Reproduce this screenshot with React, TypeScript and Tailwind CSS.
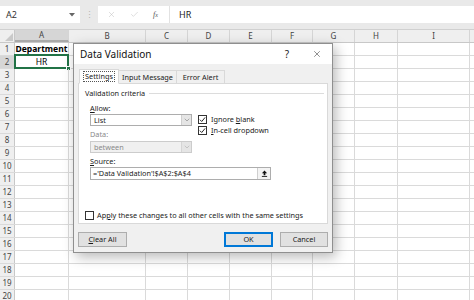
import { X, Check, ChevronDown } from "lucide-react";

const cols = [
  { name: "A", w: "w-[54px]" },
  { name: "B", w: "w-[77px]" },
  { name: "C", w: "w-[42px]" },
  { name: "D", w: "w-[42px]" },
  { name: "E", w: "w-[42px]" },
  { name: "F", w: "w-[41px]" },
  { name: "G", w: "w-[42px]" },
  { name: "H", w: "w-[43px]" },
  { name: "I", w: "w-[72px]" },
  { name: "", w: "w-[42px]" },
];

const rows = Array.from({ length: 20 }, (_, i) => i + 1);

function Tick() {
  return (
    <svg width="7" height="7" viewBox="0 0 8 8" className="block">
      <path d="M1 4.2 L3.1 6.3 L7 1.6" fill="none" stroke="#222" strokeWidth="1.1" />
    </svg>
  );
}

function CheckBox({ checked }: { checked?: boolean }) {
  return (
    <div className="w-[9px] h-[9px] border border-[#333] bg-white flex items-center justify-center flex-shrink-0">
      {checked && <Tick />}
    </div>
  );
}

function Spreadsheet() {
  return (
    <div className="flex flex-col">
      {/* Column headers */}
      <div className="flex h-[13px] bg-[#efefef] border-b border-[#c8c8c8]">
        <div className="w-[15px] flex-shrink-0 border-r border-[#c8c8c8] flex items-end justify-end pr-[1px] pb-[1px]">
          <svg width="8" height="8" viewBox="0 0 8 8">
            <path d="M8 0 L8 8 L0 8 Z" fill="#c9c9c9" />
          </svg>
        </div>
        {cols.map((c, i) => (
          <div
            key={i}
            className={`${c.w} flex-shrink-0 border-r border-[#d5d5d5] flex items-center justify-center text-[8px] text-[#444] ${
              c.name === "A" ? "bg-[#d6d6d6] border-b-2 border-b-[#a9a9a9]" : ""
            }`}
          >
            {c.name}
          </div>
        ))}
      </div>
      {rows.map((r) => (
        <div key={r} className="flex h-[13px] border-b border-[#dadada]">
          <div
            className={`w-[15px] flex-shrink-0 border-r border-[#c8c8c8] flex items-center justify-center text-[8px] text-[#444] ${
              r === 2 ? "bg-[#d6d6d6]" : "bg-[#efefef]"
            }`}
          >
            {r}
          </div>
          {cols.map((c, i) => (
            <div
              key={i}
              className={`${c.w} flex-shrink-0 border-r border-[#dadada] relative flex items-center justify-center text-[8.5px] text-black`}
            >
              {c.name === "A" && r === 1 && <span className="font-bold">Department</span>}
              {c.name === "A" && r === 2 && (
                <>
                  <span>HR</span>
                  <div className="absolute -left-[1px] -top-[2px] -right-[1px] -bottom-[1px] border-2 border-[#217346]" />
                  <div className="absolute -right-[3px] -bottom-[3px] w-[5px] h-[5px] bg-[#217346] border border-white" />
                </>
              )}
            </div>
          ))}
        </div>
      ))}
    </div>
  );
}

function FormulaBar() {
  return (
    <div className="h-[30px] bg-[#e9e9e9] flex items-start pt-[6px] border-b border-[#d0d0d0]">
      <div className="w-[80px] h-[17px] bg-white flex items-center justify-between pl-[6px] pr-[5px] text-[9px] text-[#333]">
        <span>A2</span>
        <svg width="6" height="4" viewBox="0 0 6 4">
          <path d="M0 0 L6 0 L3 3.5 Z" fill="#666" />
        </svg>
      </div>
      <div className="w-[18px] h-[17px] flex items-center justify-center text-[#b5b5b5] text-[9px] leading-none">⋮</div>
      <div className="flex-1 h-[17px] bg-white flex items-center">
        <div className="w-[72px] h-full flex items-center justify-around pl-[2px] pr-[4px] border-r border-[#e2e2e2]">
          <X size={9} strokeWidth={1.3} color="#bcbcbc" />
          <Check size={9} strokeWidth={1.3} color="#bcbcbc" />
          <span className="text-[8px] italic text-[#555] font-['Liberation_Serif',serif]">
            f<span className="text-[6px]">x</span>
          </span>
        </div>
        <span className="pl-[9px] text-[9px] text-[#222]">HR</span>
      </div>
    </div>
  );
}

function Dialog() {
  return (
    <div className="absolute left-[73px] top-[43px] w-[260px] h-[210px] border border-[#8f8f8f] bg-[#f0f0f0] flex flex-col shadow-[3px_4px_12px_rgba(0,0,0,0.28)] text-[7.3px] text-[#1a1a1a]">
      {/* Title bar */}
      <div className="h-[20px] bg-white flex items-center pl-[6px] flex-shrink-0">
        <span className="text-[10px] text-[#111]">Data Validation</span>
        <span className="ml-auto text-[10px] text-[#222] w-[12px] text-center mr-[18px]">?</span>
        <div className="w-[12px] flex justify-center mr-[9px]">
          <X size={10} strokeWidth={1.2} color="#222" />
        </div>
      </div>

      {/* Body */}
      <div className="flex-1 flex flex-col px-[4px] pt-[5px]">
        {/* Tabs */}
        <div className="flex h-[14px] items-end pl-[1px] relative z-10">
          <div className="w-[40px] h-[15px] -mb-[1px] bg-white border border-[#d9d9d9] border-b-white flex items-center justify-center">
            <span className="border border-dotted border-[#555] px-[1px] leading-[9px]">Settings</span>
          </div>
          <div className="w-[58px] h-[13px] border border-l-0 border-b-0 border-[#d9d9d9] flex items-center justify-center">
            Input Message
          </div>
          <div className="w-[48px] h-[13px] border border-l-0 border-b-0 border-[#d9d9d9] flex items-center justify-center">
            Error Alert
          </div>
        </div>

        {/* Panel */}
        <div className="h-[141px] bg-white border border-[#d9d9d9] flex flex-col pl-[6px] pt-[3px]">
          <div className="h-[12px] flex items-center pr-[3px]">
            <span>Validation criteria</span>
            <div className="flex-1 h-px bg-[#dcdcdc] ml-[4px]" />
          </div>
          <div className="pl-[5px] flex flex-col">
            <div className="h-[10px] mt-[4px] flex items-center">
              <span>
                <span className="underline">A</span>llow:
              </span>
            </div>
            <div className="flex mt-[1px] gap-[6px]">
              <div className="w-[102px] flex flex-col">
                <div className="h-[12px] border border-[#adadad] bg-white flex items-stretch">
                  <span className="flex-1 pl-[3px] flex items-center">List</span>
                  <div className="w-[10px] bg-[#e5e5e5] border-l border-[#cfcfcf] flex items-center justify-center">
                    <ChevronDown size={8} strokeWidth={1.3} color="#555" />
                  </div>
                </div>
                <div className="h-[10px] mt-[3px] flex items-center text-[#8a8a8a]">Data:</div>
                <div className="h-[12px] mt-[2px] border border-[#cccccc] bg-[#f0f0f0] flex items-stretch text-[#8a8a8a]">
                  <span className="flex-1 pl-[3px] flex items-center">between</span>
                  <div className="w-[10px] bg-[#e5e5e5] border-l border-[#d5d5d5] flex items-center justify-center">
                    <ChevronDown size={8} strokeWidth={1.3} color="#999" />
                  </div>
                </div>
              </div>
              <div className="flex flex-col">
                <div className="h-[11px] flex items-center gap-[4px]">
                  <CheckBox checked />
                  <span>
                    Ignore <span className="underline">b</span>lank
                  </span>
                </div>
                <div className="h-[11px] flex items-center gap-[4px]">
                  <CheckBox checked />
                  <span>
                    <span className="underline">I</span>n-cell dropdown
                  </span>
                </div>
              </div>
            </div>
            <div className="h-[10px] mt-[3px] flex items-center">
              <span>
                <span className="underline">S</span>ource:
              </span>
            </div>
            <div className="w-[181px] h-[13px] mt-[1px] border border-[#adadad] bg-white flex items-stretch">
              <span className="flex-1 pl-[2px] flex items-center">='Data Validation'!$A$2:$A$4</span>
              <div className="w-[13px] border-l border-[#cfcfcf] bg-[#f4f4f4] flex items-center justify-center">
                <svg width="7" height="7" viewBox="0 0 8 8">
                  <path d="M4 0.5 L7 3.8 L5 3.8 L5 6 L3 6 L3 3.8 L1 3.8 Z" fill="#111" />
                  <rect x="1" y="6.8" width="6" height="1" fill="#111" />
                </svg>
              </div>
            </div>
          </div>
          <div className="h-[9px] mt-[31px] flex items-center gap-[3px]">
            <CheckBox />
            <span>
              Ap<span className="underline">p</span>ly these changes to all other cells with the same settings
            </span>
          </div>
        </div>

        {/* Buttons */}
        <div className="flex mt-[8px] h-[15px]">
          <div className="w-[49px] h-full bg-[#e1e1e1] border border-[#adadad] flex items-center justify-center">
            <span>
              <span className="underline">C</span>lear All
            </span>
          </div>
          <div className="ml-auto w-[49px] h-full bg-[#e1e1e1] border-2 border-[#0078d7] flex items-center justify-center">
            OK
          </div>
          <div className="ml-[7px] w-[48px] h-full bg-[#e1e1e1] border border-[#adadad] flex items-center justify-center">
            Cancel
          </div>
        </div>
      </div>
    </div>
  );
}

export default function App() {
  return (
    <div className="w-[474px] h-[300px] relative overflow-hidden bg-white font-['Noto_Sans','Open_Sans',sans-serif]">
      <FormulaBar />
      <Spreadsheet />
      <Dialog />
    </div>
  );
}
